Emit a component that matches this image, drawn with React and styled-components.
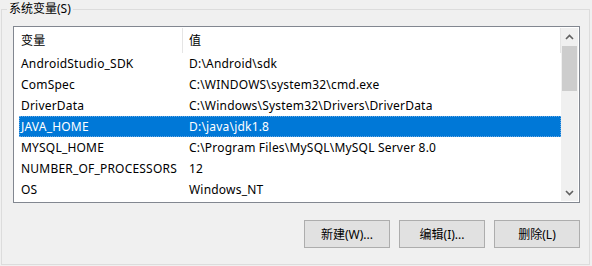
import styled, { createGlobalStyle } from "styled-components";

const GlobalStyle = createGlobalStyle`
	html, body {
		margin: 0;
		padding: 0;
		background: #f0f0f0;
	}
	body {
		font-family: "Segoe UI", "Noto Sans", "Noto Sans CJK SC", sans-serif;
		font-size: 12px;
		color: #000000;
	}
	* {
		box-sizing: border-box;
	}
`;

const rows = [
	{ name: "AndroidStudio_SDK", value: "D:\\Android\\sdk" },
	{ name: "ComSpec", value: "C:\\WINDOWS\\system32\\cmd.exe" },
	{ name: "DriverData", value: "C:\\Windows\\System32\\Drivers\\DriverData" },
	{ name: "JAVA_HOME", value: "D:\\java\\jdk1.8", selected: true },
	{ name: "MYSQL_HOME", value: "C:\\Program Files\\MySQL\\MySQL Server 8.0" },
	{ name: "NUMBER_OF_PROCESSORS", value: "12" },
	{ name: "OS", value: "Windows_NT" },
];

function Chevron({ down }) {
	return (
		<svg width="9" height="6" viewBox="0 0 9 6">
			<path
				d={down ? "M1 1 L4.5 4.5 L8 1" : "M1 5 L4.5 1.5 L8 5"}
				fill="none"
				stroke="#606060"
				strokeWidth="1.6"
			/>
		</svg>
	);
}

export default function App() {
	return (
		<>
			<GlobalStyle />
			<Group>
				<Legend>系统变量(S)</Legend>
				<ListBox>
					<Table>
						<Header>
							<HeaderCell>变量</HeaderCell>
							<HeaderCell>值</HeaderCell>
						</Header>
						{rows.map((row) => (
							<Row key={row.name} selected={row.selected}>
								<Cell>{row.name}</Cell>
								<Cell>{row.value}</Cell>
							</Row>
						))}
					</Table>
					<ScrollBar>
						<ArrowButton>
							<Chevron />
						</ArrowButton>
						<Thumb />
						<Track />
						<ArrowButton>
							<Chevron down />
						</ArrowButton>
					</ScrollBar>
				</ListBox>
				<Buttons>
					<Button>新建(W)...</Button>
					<Button>编辑(I)...</Button>
					<Button>删除(L)</Button>
				</Buttons>
			</Group>
		</>
	);
}

const Group = styled.fieldset`
	margin: 0 2px 0 1px;
	height: 265px;
	border: 1px solid #dcdcdc;
	padding: 8px 9px 16px 11px;
	display: flex;
	flex-direction: column;
`;

const Legend = styled.legend`
	margin-left: -6px;
	padding: 0 2px;
	line-height: 18px;
	color: #000000;
`;

const ListBox = styled.div`
	height: 177px;
	border: 1px solid #828790;
	background: #ffffff;
	padding: 1px;
	display: flex;
`;

const Table = styled.div`
	flex: 1;
	overflow: hidden;
	letter-spacing: 0.2px;
`;

const Header = styled.div`
	display: grid;
	grid-template-columns: 168px 1fr;
	height: 25px;
`;

const HeaderCell = styled.div`
	padding-left: 6px;
	line-height: 25px;
	border-right: 1px solid #e5e5e5;
	height: 25px;
`;

const Row = styled.div`
	display: grid;
	grid-template-columns: 168px 1fr;
	height: 21px;
	margin-left: 4px;
	line-height: 21px;
	background: ${(p) => (p.selected ? "#0078d7" : "transparent")};
	color: ${(p) => (p.selected ? "#ffffff" : "#000000")};
	outline: ${(p) => (p.selected ? "1px dotted #6aa9e2" : "none")};
	outline-offset: -1px;
`;

const Cell = styled.div`
	padding-left: 2px;
	white-space: nowrap;
	overflow: hidden;
`;

const ScrollBar = styled.div`
	width: 17px;
	background: #f0f0f0;
	display: flex;
	flex-direction: column;
`;

const ArrowButton = styled.div`
	height: 17px;
	display: flex;
	align-items: center;
	justify-content: center;
`;

const Thumb = styled.div`
	height: 45px;
	margin: 1px 1px 0;
	background: #cdcdcd;
`;

const Track = styled.div`
	flex: 1;
`;

const Buttons = styled.div`
	display: flex;
	justify-content: flex-end;
	gap: 9px;
	margin-top: 17px;
`;

const Button = styled.div`
	width: 86px;
	height: 28px;
	background: #e1e1e1;
	border: 1px solid #adadad;
	display: flex;
	align-items: center;
	justify-content: center;
	font-family: "Noto Sans", "Noto Sans CJK SC", sans-serif;
	font-size: 12px;
`;
